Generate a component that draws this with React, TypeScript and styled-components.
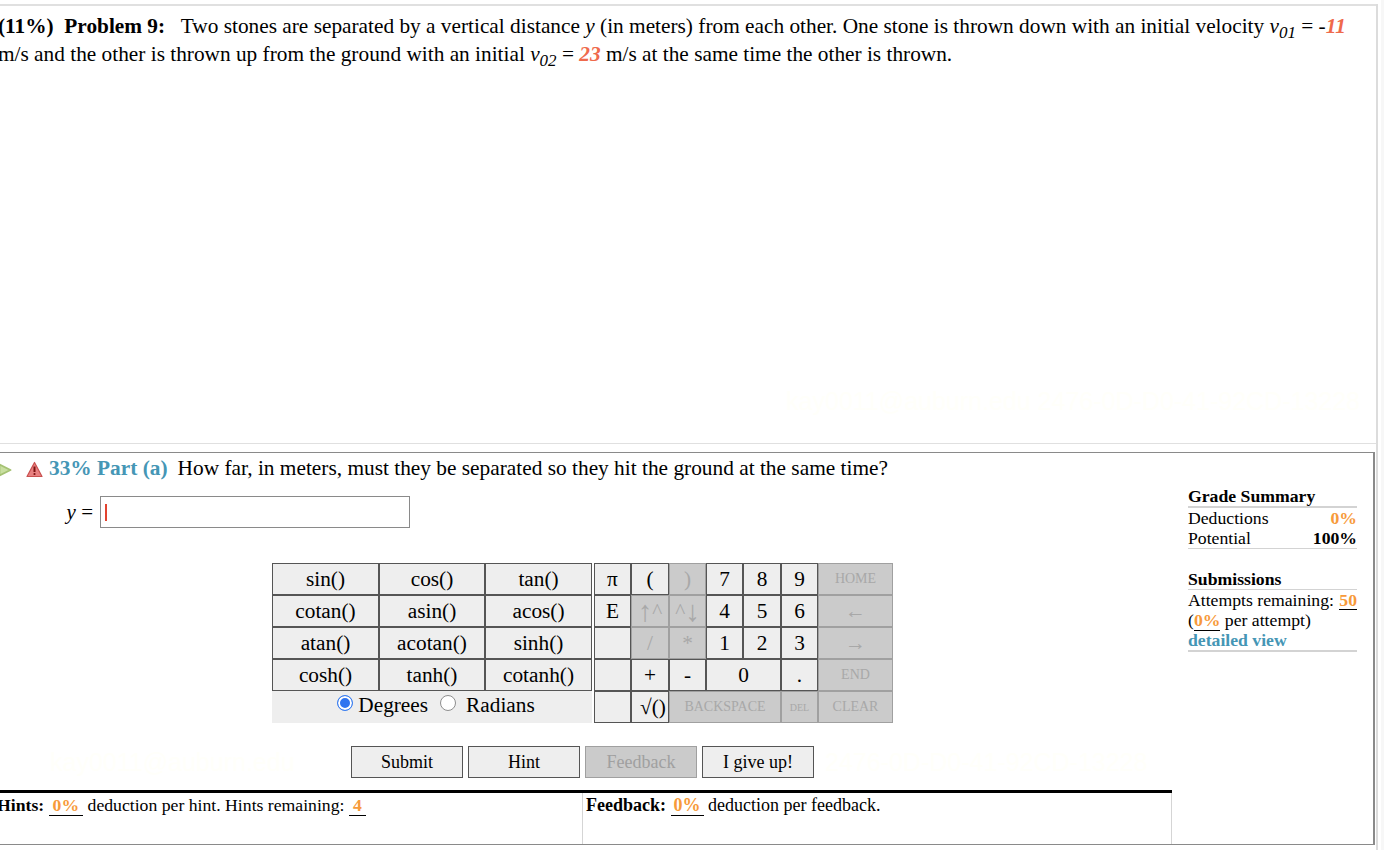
import React from "react";
import styled, { createGlobalStyle } from "styled-components";

const Global = createGlobalStyle`
  html, body { margin: 0; padding: 0; background: #fff; overflow: hidden; }
  body { font-family: "Liberation Serif", "Times New Roman", serif; color: #000; }
`;

const Page = styled.div`
  width: 1384px;
  height: 850px;
  overflow: hidden;
  box-sizing: border-box;
  border-right: 3px solid #f7f7f7;
`;

const Shell = styled.div`
  width: 1378px;
  height: 846px;
  margin-top: 4px;
  box-sizing: border-box;
  border-right: 2px solid #dcdcdc;
`;

const ProblemPanel = styled.section`
  height: 440px;
  box-sizing: border-box;
  padding: 6px 0 0 0;
  border-top: 2px solid #e0e0e0;
  border-bottom: 1px solid #e0e0e0;
  font-size: 21.32px;
  line-height: 28px;
  white-space: nowrap;
  display: flex;
  flex-direction: column;
`;

const ProblemLine = styled.div`
  height: 28px;
  margin-left: -2px;
`;

const TopWatermark = styled.div`
  margin-top: 319px;
  align-self: flex-end;
  padding-right: 16px;
  color: #fffffa;
  font-family: "Liberation Sans", sans-serif;
  font-size: 25px;
`;

const Strong = styled.b`
  font-weight: bold;
`;

const Var = styled.i`
  font-style: italic;
`;

const Sub = styled.sub`
  font-size: 17px;
  font-style: italic;
  line-height: 0;
`;

const Given = styled.b`
  color: #ef6a4c;
  font-style: italic;
`;

const LeadGap = styled.span`
  margin-left: 5px;
`;

const PartPanel = styled.section`
  margin-top: 8px;
  width: 1375px;
  height: 393px;
  box-sizing: border-box;
  border-top: 1px solid #8a8a8a;
  border-right: 2px solid #8a8a8a;
  border-bottom: 1px solid #8a8a8a;
  display: grid;
  grid-template-columns: 1172px 1fr;
`;

const Main = styled.div`
  display: flex;
  flex-direction: column;
  min-width: 0;
`;

const PartHeading = styled.div`
  display: flex;
  align-items: center;
  height: 31px;
  font-size: 21.35px;
  white-space: nowrap;
`;

const Arrow = styled.svg`
  width: 14px;
  height: 14px;
  margin-left: -2px;
  margin-top: 2px;
  flex: none;
`;

const Warning = styled.svg`
  width: 17px;
  height: 17px;
  margin-left: 14px;
  margin-top: 2px;
  flex: none;
`;

const PartTitle = styled.b`
  color: #4596b5;
  margin-left: 6px;
  margin-right: 10px;
`;

const AnswerRow = styled.div`
  display: flex;
  align-items: center;
  margin-top: 12px;
  height: 32px;
`;

const AnswerLabel = styled.div`
  width: 93px;
  text-align: right;
  font-size: 21px;
`;

const AnswerBox = styled.div`
  margin-left: 7px;
  width: 310px;
  height: 32px;
  box-sizing: border-box;
  border: 1px solid #8a8a8a;
  display: flex;
  align-items: center;
  padding-left: 4px;
`;

const Caret = styled.span`
  width: 1.5px;
  height: 17px;
  background: #e2432f;
`;

const KeypadArea = styled.div`
  display: flex;
  margin-top: 35px;
  margin-left: 272px;
  gap: 2px;
`;

const FunctionPad = styled.div`
  display: grid;
  grid-template-columns: 107px 106px 107px;
  grid-template-rows: repeat(5, 32px);
  width: 320px;
`;

const NumberPad = styled.div`
  display: grid;
  grid-template-columns: 37px 38px 37px 37px 38px 37px 75px;
  grid-template-rows: repeat(5, 32px);
  width: 299px;
`;

const Key = styled.div<{ $off?: boolean; $span?: number; $size?: number; $shift?: number }>`
  grid-column: span ${(p) => p.$span ?? 1};
  box-sizing: border-box;
  display: flex;
  align-items: center;
  justify-content: center;
  background: ${(p) => (p.$off ? "#cbcbcb" : "#eeeeee")};
  color: ${(p) => (p.$off ? "#a8a8a8" : "#000")};
  border: 1px solid ${(p) => (p.$off ? "#a0a0a0" : "#555")};
  font-size: ${(p) => p.$size ?? 21.3}px;
  padding-left: ${(p) => p.$shift ?? 0}px;
  white-space: nowrap;
  overflow: hidden;
`;

const TallArrow = styled.span`
  font-size: 29px;
  line-height: 0;
`;

const AngleRow = styled.div`
  grid-column: span 3;
  background: #eeeeee;
  display: flex;
  align-items: center;
  justify-content: center;
  font-size: 21.3px;
  padding: 0 0 4px 8px;
`;

const Radio = styled.span<{ $on?: boolean }>`
  width: 16px;
  height: 16px;
  box-sizing: border-box;
  border-radius: 50%;
  margin: 0 ${(p) => (p.$on ? 5 : 10)}px 4px ${(p) => (p.$on ? 0 : 12)}px;
  background: ${(p) => (p.$on ? "#2f74f0" : "#fff")};
  border: ${(p) => (p.$on ? "1.5px solid #3b7ff0" : "1px solid #8e8e8e")};
  box-shadow: ${(p) => (p.$on ? "inset 0 0 0 2px #fff" : "none")};
`;

const ButtonRow = styled.div`
  display: flex;
  align-items: center;
  margin-top: 23px;
  height: 32px;
  padding-left: 50px;
`;

const Watermark = styled.span<{ $w: number }>`
  width: ${(p) => p.$w}px;
  flex: none;
  color: #fffffa;
  font-size: 25px;
  white-space: nowrap;
  font-family: "Liberation Sans", sans-serif;
`;

const TrailingMark = styled(Watermark)`
  padding-left: 11px;
`;

const Buttons = styled.div`
  display: flex;
  gap: 5px;
  flex: none;
`;

const Button = styled.div<{ $off?: boolean }>`
  width: 112px;
  height: 32px;
  box-sizing: border-box;
  display: flex;
  align-items: center;
  justify-content: center;
  font-size: 18px;
  background: ${(p) => (p.$off ? "#cbcbcb" : "#eeeeee")};
  color: ${(p) => (p.$off ? "#a0a0a0" : "#000")};
  border: 1px solid ${(p) => (p.$off ? "#a0a0a0" : "#555")};
`;

const InfoBar = styled.div`
  margin-top: 12px;
  flex: 1;
  display: grid;
  grid-template-columns: 583px 1fr;
  border-top: 3px solid #000;
  white-space: nowrap;
`;

const InfoCell = styled.div<{ $last?: boolean }>`
  padding-top: 2px;
  line-height: 21px;
  font-size: ${(p) => (p.$last ? 18 : 17.7)}px;
  border-right: 1px solid #d5d5d5;
  padding-left: ${(p) => (p.$last ? 3 : 0)}px;
`;

const HintsText = styled.div`
  margin-left: -3px;
`;

const Figure = styled.b<{ $pad?: number }>`
  display: inline-block;
  color: #f79a3a;
  font-weight: bold;
  border-bottom: 1px solid #000;
  padding: 0 ${(p) => p.$pad ?? 0}px;
  line-height: 20px;
`;

const Side = styled.aside`
  padding: 33px 0 0 16px;
  width: 169px;
  font-size: 17.7px;
  line-height: 20px;
  white-space: nowrap;
`;

const SideHeading = styled.div<{ $thick?: boolean }>`
  font-weight: bold;
  height: 20px;
  line-height: 20px;
  border-bottom: ${(p) => (p.$thick ? 2 : 1)}px solid #d3d3d3;
`;

const SideRow = styled.div`
  display: flex;
  justify-content: space-between;
  height: 20px;
`;

const SideGroup = styled.div<{ $thick?: boolean }>`
  margin-bottom: 20px;
  border-bottom: ${(p) => (p.$thick ? 2 : 1)}px solid #d3d3d3;
`;

const Orange = styled.b`
  color: #f79a3a;
`;

const SideLink = styled.b`
  color: #4596b5;
  display: block;
  height: 20px;
`;

const fnKeys = [
  "sin()", "cos()", "tan()",
  "cotan()", "asin()", "acos()",
  "atan()", "acotan()", "sinh()",
  "cosh()", "tanh()", "cotanh()",
];

export default function App() {
  return (
    <Page>
      <Global />
      <Shell>
        <ProblemPanel>
          <ProblemLine>
            <Strong>(11%)&nbsp; Problem 9:</Strong>
            <LeadGap>&nbsp;&nbsp;Two stones are separated by a vertical distance <Var>y</Var> (in meters) from each other. One stone is thrown down with an initial velocity <Var>v</Var><Sub>01</Sub> = -<Given>11</Given></LeadGap>
          </ProblemLine>
          <ProblemLine>
            m/s and the other is thrown up from the ground with an initial <Var>v</Var><Sub>02</Sub> = <Given>23</Given> m/s at the same time the other is thrown.
          </ProblemLine>
          <TopWatermark>kay0011@auburn.edu 2476-0D-D0-41-92CD-13228</TopWatermark>
        </ProblemPanel>
        <PartPanel>
          <Main>
            <PartHeading>
              <Arrow viewBox="0 0 14 14">
                <path d="M1.5 1.5 L12.5 7 L1.5 12.5 Z" fill="#c9dfa0" stroke="#a5c273" strokeWidth="1.8" strokeLinejoin="round" />
              </Arrow>
              <Warning viewBox="0 0 17 17">
                <path d="M8.5 1.5 L16 15.5 H1 Z" fill="#e88080" stroke="#c9504f" strokeWidth="1.2" strokeLinejoin="round" />
                <path d="M8.5 5.5 V11" stroke="#7a1010" strokeWidth="2" />
                <circle cx="8.5" cy="13" r="1.1" fill="#7a1010" />
              </Warning>
              <PartTitle>33% Part (a)</PartTitle>
              How far, in meters, must they be separated so they hit the ground at the same time?
            </PartHeading>
            <AnswerRow>
              <AnswerLabel><Var>y</Var> =</AnswerLabel>
              <AnswerBox><Caret /></AnswerBox>
            </AnswerRow>
            <KeypadArea>
              <FunctionPad>
                {fnKeys.map((k) => <Key key={k}>{k}</Key>)}
                <AngleRow>
                  <Radio $on />Degrees<Radio />Radians
                </AngleRow>
              </FunctionPad>
              <NumberPad>
                <Key>π</Key><Key>(</Key><Key $off>)</Key><Key>7</Key><Key>8</Key><Key>9</Key><Key $off $size={14}>HOME</Key>
                <Key>E</Key><Key $off><TallArrow>↑</TallArrow>^</Key><Key $off>^<TallArrow>↓</TallArrow></Key><Key>4</Key><Key>5</Key><Key>6</Key><Key $off $size={21}>←</Key>
                <Key /><Key $off>/</Key><Key $off>*</Key><Key>1</Key><Key>2</Key><Key>3</Key><Key $off $size={21}>→</Key>
                <Key /><Key>+</Key><Key>-</Key><Key $span={2}>0</Key><Key>.</Key><Key $off $size={14}>END</Key>
                <Key /><Key $shift={6}>√()</Key><Key $off $span={3} $size={14}>BACKSPACE</Key><Key $off $size={10}>DEL</Key><Key $off $size={14}>CLEAR</Key>
              </NumberPad>
            </KeypadArea>
            <ButtonRow>
              <Watermark $w={301}>kay0011@auburn.edu</Watermark>
              <Buttons>
                <Button>Submit</Button>
                <Button>Hint</Button>
                <Button $off>Feedback</Button>
                <Button>I give up!</Button>
              </Buttons>
              <TrailingMark $w={340}>2476-0D-D0-41-92CD-13228</TrailingMark>
            </ButtonRow>
            <InfoBar>
              <InfoCell>
                <HintsText>
                  <Strong>Hints:</Strong> <Figure $pad={4}>0%</Figure> deduction per hint. Hints remaining: <Figure $pad={4}>4</Figure>
                </HintsText>
              </InfoCell>
              <InfoCell $last>
                <Strong>Feedback:</Strong> <Figure $pad={3}>0%</Figure> deduction per feedback.
              </InfoCell>
            </InfoBar>
          </Main>
          <Side>
            <SideGroup>
              <SideHeading $thick>Grade Summary</SideHeading>
              <SideRow>Deductions<Orange>0%</Orange></SideRow>
              <SideRow>Potential<Strong>100%</Strong></SideRow>
            </SideGroup>
            <SideGroup $thick>
              <SideHeading>Submissions</SideHeading>
              <SideRow>Attempts remaining:<Figure>50</Figure></SideRow>
              <SideRow><span>(<Figure>0%</Figure> per attempt)</span></SideRow>
              <SideLink>detailed view</SideLink>
            </SideGroup>
          </Side>
        </PartPanel>
      </Shell>
    </Page>
  );
}
